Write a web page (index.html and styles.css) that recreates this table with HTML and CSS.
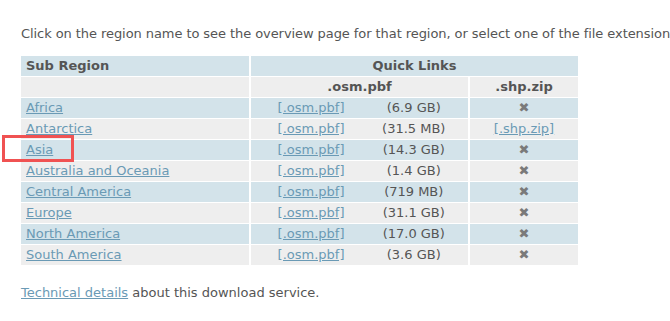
FILE: index.html
```html
<!DOCTYPE html>
<html>
<head>
<meta charset="utf-8">
<link rel="stylesheet" href="styles.css">
</head>
<body>
<div class="page">
  <p class="intro">Click on the region name to see the overview page for that region, or select one of the file extension</p>
  <table class="regions">
    <tr class="blue">
      <th class="name">Sub Region</th>
      <th colspan="2">Quick Links</th>
    </tr>
    <tr class="gray">
      <th></th>
      <th>.osm.pbf</th>
      <th>.shp.zip</th>
    </tr>
    <tr class="blue">
      <td><a href="#">Africa</a></td>
      <td><div class="pbf"><span class="lk"><a href="#">[.osm.pbf]</a></span><span class="sz">(6.9&nbsp;GB)</span></div></td>
      <td class="c"><span class="x">✖</span></td>
    </tr>
    <tr class="gray">
      <td><a href="#">Antarctica</a></td>
      <td><div class="pbf"><span class="lk"><a href="#">[.osm.pbf]</a></span><span class="sz">(31.5&nbsp;MB)</span></div></td>
      <td class="c"><a href="#">[.shp.zip]</a></td>
    </tr>
    <tr class="blue">
      <td><a href="#">Asia</a></td>
      <td><div class="pbf"><span class="lk"><a href="#">[.osm.pbf]</a></span><span class="sz">(14.3&nbsp;GB)</span></div></td>
      <td class="c"><span class="x">✖</span></td>
    </tr>
    <tr class="gray">
      <td><a href="#">Australia and Oceania</a></td>
      <td><div class="pbf"><span class="lk"><a href="#">[.osm.pbf]</a></span><span class="sz">(1.4&nbsp;GB)</span></div></td>
      <td class="c"><span class="x">✖</span></td>
    </tr>
    <tr class="blue">
      <td><a href="#">Central America</a></td>
      <td><div class="pbf"><span class="lk"><a href="#">[.osm.pbf]</a></span><span class="sz">(719&nbsp;MB)</span></div></td>
      <td class="c"><span class="x">✖</span></td>
    </tr>
    <tr class="gray">
      <td><a href="#">Europe</a></td>
      <td><div class="pbf"><span class="lk"><a href="#">[.osm.pbf]</a></span><span class="sz">(31.1&nbsp;GB)</span></div></td>
      <td class="c"><span class="x">✖</span></td>
    </tr>
    <tr class="blue">
      <td><a href="#">North America</a></td>
      <td><div class="pbf"><span class="lk"><a href="#">[.osm.pbf]</a></span><span class="sz">(17.0&nbsp;GB)</span></div></td>
      <td class="c"><span class="x">✖</span></td>
    </tr>
    <tr class="gray">
      <td><a href="#">South America</a></td>
      <td><div class="pbf"><span class="lk"><a href="#">[.osm.pbf]</a></span><span class="sz">(3.6&nbsp;GB)</span></div></td>
      <td class="c"><span class="x">✖</span></td>
    </tr>
  </table>
  <p class="foot"><a href="#">Technical details</a> about this download service.</p>
</div>
<div class="highlight"></div>
</body>
</html>
```

FILE: styles.css
```css
html, body {
  margin: 0;
  padding: 0;
  background: #ffffff;
  overflow: hidden;
}
body {
  font-family: "DejaVu Sans", Verdana, sans-serif;
  font-size: 13px;
  color: #555555;
  width: 670px;
  height: 321px;
  position: relative;
}
.page {
  padding: 25px 0 0 21px;
}
.intro {
  margin: 0;
  line-height: 18px;
  white-space: nowrap;
  letter-spacing: -0.07px;
}
a {
  color: #6a9ab5;
  text-decoration: underline;
}
.regions {
  margin-top: 13px;
  margin-left: 0;
  border-collapse: separate;
  border-spacing: 0;
  width: 557px;
}
.regions th, .regions td {
  height: 20px;
  padding: 0;
  line-height: 20px;
  border-right: 2px solid #fff;
  border-bottom: 1px solid #fff;
  white-space: nowrap;
}
.regions tr > :last-child {
  border-right: 0;
}
.regions th {
  font-weight: bold;
  text-align: center;
}
.regions th.name {
  text-align: left;
  padding-left: 5px;
}
.regions td:first-child {
  padding-left: 5px;
  width: 223px;
}
.regions tr > :nth-child(2) {
  width: 217px;
}
.blue > * {
  background: #d3e3ea;
}
.gray > * {
  background: #eeeeee;
}
.pbf {
  display: grid;
  grid-template-columns: 1fr 1fr;
}
.lk {
  text-align: right;
  padding-right: 15px;
}
.sz {
  text-align: center;
}
.c {
  text-align: center;
}
.x {
  color: #7a7a7a;
  font-size: 13px;
}
.foot {
  margin: 18px 0 0 0;
  line-height: 18px;
}
.highlight {
  position: absolute;
  left: 2px;
  top: 135px;
  width: 66px;
  height: 21px;
  border: 3px solid #f05252;
}
```
